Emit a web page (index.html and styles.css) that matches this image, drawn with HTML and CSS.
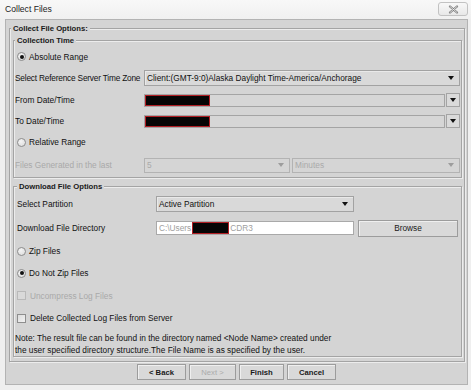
FILE: index.html
```html
<!DOCTYPE html>
<html>
<head>
<meta charset="utf-8">
<link rel="stylesheet" href="styles.css">
</head>
<body>
<div class="window">
  <div class="titlebar">
    <span class="title">Collect Files</span>
    <span class="close"><svg width="11" height="9" viewBox="0 0 11 9"><path d="M2 1.5 L9 7.5 M9 1.5 L2 7.5" stroke="#7a7a7a" stroke-width="2.2" stroke-linecap="round"/><path d="M2 1.5 L9 7.5 M9 1.5 L2 7.5" stroke="#f4f4f4" stroke-width="0.8" stroke-linecap="round"/></svg></span>
  </div>
  <div class="client">
    <div class="group outer">
      <div class="legend">Collect File Options:</div>
      <div class="group sub time">
        <div class="legend">Collection Time</div>
        <div class="row h21 opt"><span class="radio on"></span><span>Absolute Range</span></div>
        <div class="row h22">
          <span class="label lw1 tight">Select Reference Server Time Zone</span>
          <div class="combo tz"><span class="ctext">Client:(GMT-9:0)Alaska Daylight Time-America/Anchorage</span><span class="arrow"></span></div>
        </div>
        <div class="row h22">
          <span class="label lw1">From Date/Time</span>
          <div class="datefield"><span class="redact"></span></div>
          <div class="datebtn"><span class="arrow"></span></div>
        </div>
        <div class="row h20">
          <span class="label lw1">To Date/Time</span>
          <div class="datefield"><span class="redact"></span></div>
          <div class="datebtn"><span class="arrow"></span></div>
        </div>
        <div class="row h22 opt"><span class="radio"></span><span>Relative Range</span></div>
        <div class="row h24">
          <span class="label lw1 disabled">Files Generated in the last</span>
          <div class="combo small n5 dis"><span class="ctext">5</span><span class="arrow"></span></div>
          <div class="combo small mins dis"><span class="ctext">Minutes</span><span class="arrow"></span></div>
        </div>
      </div>
      <div class="group sub dl">
        <div class="legend">Download File Options</div>
        <div class="row h24">
          <span class="label lw2">Select Partition</span>
          <div class="combo part"><span class="ctext">Active Partition</span><span class="arrow"></span></div>
        </div>
        <div class="row h24">
          <span class="label lw2">Download File Directory</span>
          <div class="textfield"><span>C:\Users</span><span class="redact r2"></span><span>CDR3</span></div>
          <div class="button browse">Browse</div>
        </div>
        <div class="row h22 opt"><span class="radio"></span><span>Zip Files</span></div>
        <div class="row h22 opt"><span class="radio on"></span><span>Do Not Zip Files</span></div>
        <div class="row h23 opt"><span class="check dis"></span><span class="disabled">Uncompress Log Files</span></div>
        <div class="row h22 opt"><span class="check"></span><span>Delete Collected Log Files from Server</span></div>
        <p class="note">Note: The result file can be found in the directory named &lt;Node Name&gt; created under<br>the user specified directory structure.The File Name is as specified by the user.</p>
      </div>
    </div>
    <div class="buttons">
      <div class="button nav back">&lt; Back</div>
      <div class="button nav next dis">Next &gt;</div>
      <div class="button nav finish">Finish</div>
      <div class="button nav cancel">Cancel</div>
    </div>
  </div>
</div>
</body>
</html>
```

FILE: styles.css
```css
* { box-sizing: border-box; }

body {
  margin: 0;
  background: #ffffff;
  font-family: "Liberation Sans", Arial, sans-serif;
  font-size: 8.3px;
  color: #111111;
}

.window {
  width: 471px;
  height: 390px;
  background: #efefef;
  padding: 0 3px 5px 5px;
  display: flex;
  flex-direction: column;
}

.titlebar {
  height: 19px;
  flex: none;
  display: flex;
  justify-content: space-between;
  align-items: flex-start;
  background: linear-gradient(#f8f8f8, #f0f0f0);
  margin: 0 -3px 0 -5px;
  padding: 0 3px 0 5px;
}

.title {
  font-size: 8.6px;
  line-height: 19px;
  color: #222;
}

.close {
  width: 30px;
  height: 14px;
  margin-top: 2px;
  border: 1px solid #c2c2c2;
  border-radius: 3px;
  background: linear-gradient(#f8f8f8, #e8e8e8);
  display: flex;
  align-items: center;
  justify-content: center;
}

.client {
  flex: 1;
  background: #d4d4d4;
  border: 1px solid #b3b3b3;
  display: flex;
  flex-direction: column;
}

.group {
  border: 1px solid #a4a4a4;
  box-shadow: inset 1px 1px 0 #ececec, 1px 1px 0 #ececec;
}

.legend {
  width: fit-content;
  margin: -6px 0 0 1px;
  padding: 0 2px;
  height: 11px;
  line-height: 11px;
  background: #d4d4d4;
  font-weight: bold;
  font-size: 7.7px;
  color: #1a1a1a;
}

.outer {
  margin: 8px 2px 0 3px;
  padding: 0 2px 4px 0;
}

.sub {
  margin-left: 3px;
  width: 449px;
}

.time {
  margin-top: 6px;
  padding: 1px 1px 0 1px;
}

.time .legend { margin-top: -7px; margin-left: 0; }
.dl .legend { margin-left: 2px; }

.dl {
  margin-top: 8px;
  padding: 0 1px 0 1px;
}

.row {
  display: flex;
  align-items: center;
}

.h20 { height: 20px; }
.h21 { height: 21px; }
.h22 { height: 22px; }
.h23 { height: 23px; }
.h24 { height: 24px; }

.opt { padding-left: 2px; }
.opt > span:last-child { margin-left: 3px; }

.label { flex: none; white-space: nowrap; }
.tight { letter-spacing: -0.2px; }
.lw1 { width: 129px; }
.lw2 { width: 141px; padding-left: 2px; }

.disabled { color: #a9a9a9; }

.radio {
  width: 9px;
  height: 9px;
  border-radius: 50%;
  border: 1px solid #8c8c8c;
  background: radial-gradient(circle at 40% 35%, #f4f4f4, #d9d9d9);
  display: flex;
  align-items: center;
  justify-content: center;
  flex: none;
}
.radio.on::after {
  content: "";
  width: 4px;
  height: 4px;
  border-radius: 50%;
  background: #111;
}

.check {
  width: 9px;
  height: 9px;
  border: 1px solid #8e8e8e;
  background: linear-gradient(135deg, #dcdcdc, #f2f2f2);
  flex: none;
}
.check.dis { border-color: #b9b9b9; background: #d9d9d9; }
.check + span { margin-left: 4px !important; }

.combo {
  flex: none;
  display: flex;
  align-items: center;
  justify-content: space-between;
  border: 1px solid #a2a2a2;
  background: #d9d9d9;
  box-shadow: inset 1px 1px 0 #e9e9e9;
  padding: 0 5px 0 2px;
}
.combo .ctext { white-space: nowrap; }
.tz { width: 316px; height: 16px; }
.small { height: 15px; }
.n5 { width: 146px; }
.mins { width: 168px; margin-left: 2px; }
.part { width: 198px; height: 16px; }

.combo.dis { color: #aaaaaa; border-color: #b3b3b3; box-shadow: none; background: #d5d5d5; }
.combo.dis .arrow { border-top-color: #9d9d9d; }

.arrow {
  width: 0;
  height: 0;
  border-left: 3.5px solid transparent;
  border-right: 3.5px solid transparent;
  border-top: 4px solid #111;
  flex: none;
}

.datefield {
  width: 301px;
  height: 13px;
  border: 1px solid #a4a4a4;
  background: #d6d6d6;
  flex: none;
}
.redact {
  display: block;
  width: 65px;
  height: 11px;
  background: #050505;
  border: 1px solid #b01e24;
}
.datebtn {
  width: 14px;
  height: 14px;
  margin-left: 1px;
  border: 1px solid #a4a4a4;
  background: #dadada;
  display: flex;
  align-items: center;
  justify-content: center;
  flex: none;
}

.textfield {
  width: 198px;
  height: 14px;
  border: 1px solid #a9a9a9;
  background: #ffffff;
  color: #a0a0a0;
  display: flex;
  align-items: center;
  padding-left: 2px;
  flex: none;
}
.redact.r2 { width: 37px; height: 12px; margin: 0 1px; }

.button {
  display: flex;
  align-items: center;
  justify-content: center;
  border: 1px solid #9c9c9c;
  background: #d9d9d9;
  box-shadow: inset 1px 1px 0 #efefef;
  color: #1a1a1a;
  flex: none;
}
.browse { width: 100px; height: 17px; margin-left: 4px; }

.note {
  margin: 0;
  padding: 4px 0 0 0;
  height: 27px;
  line-height: 11.5px;
  white-space: nowrap;
}

.buttons {
  display: flex;
  justify-content: center;
  gap: 3px;
  margin-top: 2px;
}
.nav {
  height: 16px;
  font-weight: bold;
  font-size: 7.7px;
}
.back { width: 49px; }
.next { width: 47px; }
.finish { width: 45px; }
.cancel { width: 49px; }
.button.dis { color: #ababab; font-weight: normal; }
```
